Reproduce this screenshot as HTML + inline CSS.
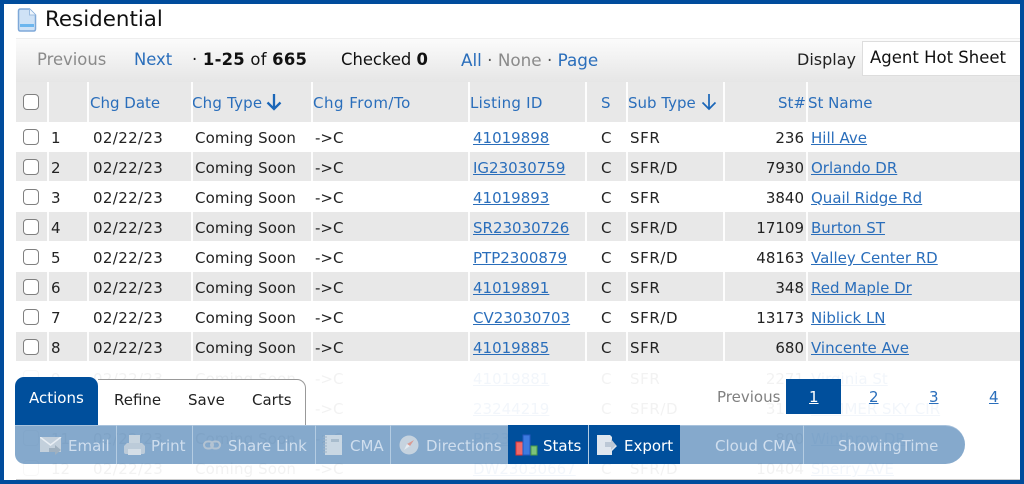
<!DOCTYPE html>
<html><head><meta charset="utf-8">
<style>
html,body{margin:0;padding:0;background:#fff}
body{width:1024px;height:484px;position:relative;overflow:hidden;font-family:"DejaVu Sans",sans-serif;font-size:15px;color:#222}
.wrap{position:absolute;left:0;top:0;width:1024px;height:484px;filter:blur(.3px)}
.a{position:absolute;white-space:nowrap}
.frame{position:absolute;left:0;top:0;width:1016px;height:476px;border:4px solid #004c9c;z-index:50;pointer-events:none}
.bar{position:absolute;left:16px;top:38px;width:1004px;height:43px;background:linear-gradient(#fbfbfb,#e6e6e6);border-top:1px solid #eee}
.tb{font-size:16.4px;top:51px;line-height:18px}
.blue{color:#2a6ebb}.gray{color:#8a8a8a}
.hd{position:absolute;left:16px;top:82px;width:1004px;height:40px;background:#e8e8e8}
.sep{position:absolute;top:82px;width:2px;height:281px;background:#fff;opacity:.9}
.row{position:absolute;left:16px;width:1004px;height:30px}
.row.g{background:#e8e8e8}
.row:after{content:"";position:absolute;left:0;right:0;bottom:0;height:1px;background:#fff}
.cb{position:absolute;width:14px;height:14px;border:1.5px solid #808080;border-radius:4px;background:#fff}
.row .cb{top:7px !important}
.t{position:absolute;white-space:nowrap;line-height:18px;top:7px}
.d{letter-spacing:.35px}
.c{letter-spacing:.13px}
.f{letter-spacing:.6px}
.h{position:absolute;white-space:nowrap;color:#2a6ebb;top:94px;line-height:18px}
.t a,.l{color:#2a6ebb;text-decoration:underline}
.fade{position:absolute;left:0;top:363px;width:1024px;height:117px;opacity:.06}
.tabs{position:absolute;left:98px;top:379px;width:207px;height:46px;background:#fff;border:1px solid #999;border-left:0;border-bottom:0;border-radius:0 9px 0 0}
.act{position:absolute;left:15px;top:377px;width:83px;height:49px;background:#004f9c;border-radius:9px 9px 0 0;color:#fff}
.tool{position:absolute;left:15px;top:425px;width:950px;height:39px;background:rgba(0,76,148,.48);border-radius:0 20px 20px 10px;border-top:1px solid #a8c2dc;box-sizing:border-box}
.dk{position:absolute;top:425px;height:39px;background:#004f9c}
.s2{position:absolute;top:425px;width:1px;height:39px;background:#b4cce2}
.w{color:#cfdeee;top:437px;line-height:18px}
.ww{color:#fff;top:437px;line-height:18px}
</style></head><body><div class="wrap">
<svg class="a" style="left:17px;top:8px" width="20" height="24" viewBox="0 0 20 24"><path d="M1.500 3q0-2 2-2h9l6 6v14q0 2-2 2h-13q-2 0-2-2z" fill="#cfe2f6" stroke="#7ea8d8" stroke-width="1.500"/><path d="M12.500 1v6h6" fill="#eef5fc" stroke="#9dbde0"/><rect x="3" y="16" width="14" height="3" fill="#6db6ee"/></svg>
<div class="a" style="left:45px;top:7px;font-size:21.400px;line-height:26px;color:#111">Residential</div>
<div class="bar"></div>
<div class="a tb gray" style="left:37px">Previous</div>
<div class="a tb blue" style="left:134px">Next</div>
<div class="a tb" style="left:192px;color:#111;letter-spacing:.25px">· <b>1-25</b> of <b>665</b></div>
<div class="a tb" style="left:341px;color:#111">Checked <b>0</b></div>
<div class="a tb blue" style="left:461px;font-size:16.800px">All <span style="color:#555">·</span> <span class="gray">None</span> <span style="color:#555">·</span> Page</div>
<div class="a tb" style="left:797px;color:#222;font-size:16px">Display</div>
<div class="a" style="left:862px;top:41px;width:158px;height:33px;background:#fff;border:1px solid #ddd;border-right:0;box-sizing:content-box"></div>
<div class="a" style="left:870px;top:49px;font-size:16.500px;line-height:18px;color:#111">Agent Hot Sheet</div>
<div class="hd"></div>
<div class="cb" style="left:23px;top:94px"></div>
<div class="h" style="left:90px">Chg Date</div>
<div class="h" style="left:192px;letter-spacing:.2px">Chg Type</div>
<svg class="a" style="left:265px;top:93px" width="18" height="18" viewBox="0 0 18 18"><path d="M9 1v15M2.500 9.500L9 16l6.500-6.500" fill="none" stroke="#1a66b8" stroke-width="2.300"/></svg>
<div class="h" style="left:313px;letter-spacing:.5px">Chg From/To</div>
<div class="h" style="left:470px;letter-spacing:.25px">Listing ID</div>
<div class="h" style="left:601px">S</div>
<div class="h" style="left:628px">Sub Type</div>
<svg class="a" style="left:700px;top:93px" width="18" height="18" viewBox="0 0 18 18"><path d="M9 1v15M2.500 9.500L9 16l6.500-6.500" fill="none" stroke="#1a66b8" stroke-width="1.700"/></svg>
<div class="h" style="left:778px">St#</div>
<div class="h" style="left:808px">St Name</div>

<div class="row" style="top:122px"><div class="cb" style="left:7px"></div><div class="t" style="left:35px">1</div><div class="t d" style="left:77px">02/22/23</div><div class="t c" style="left:179px">Coming Soon</div><div class="t" style="left:299px">-&gt;C</div><div class="t" style="left:457px"><a>41019898</a></div><div class="t" style="left:585px">C</div><div class="t f" style="left:614px">SFR</div><div class="t" style="right:216px">236</div><div class="t" style="left:795px"><a>Hill Ave</a></div></div>
<div class="row g" style="top:152px"><div class="cb" style="left:7px"></div><div class="t" style="left:35px">2</div><div class="t d" style="left:77px">02/22/23</div><div class="t c" style="left:179px">Coming Soon</div><div class="t" style="left:299px">-&gt;C</div><div class="t" style="left:457px"><a>IG23030759</a></div><div class="t" style="left:585px">C</div><div class="t f" style="left:614px">SFR/D</div><div class="t" style="right:216px">7930</div><div class="t" style="left:795px"><a>Orlando DR</a></div></div>
<div class="row" style="top:182px"><div class="cb" style="left:7px"></div><div class="t" style="left:35px">3</div><div class="t d" style="left:77px">02/22/23</div><div class="t c" style="left:179px">Coming Soon</div><div class="t" style="left:299px">-&gt;C</div><div class="t" style="left:457px"><a>41019893</a></div><div class="t" style="left:585px">C</div><div class="t f" style="left:614px">SFR</div><div class="t" style="right:216px">3840</div><div class="t" style="left:795px"><a>Quail Ridge Rd</a></div></div>
<div class="row g" style="top:212px"><div class="cb" style="left:7px"></div><div class="t" style="left:35px">4</div><div class="t d" style="left:77px">02/22/23</div><div class="t c" style="left:179px">Coming Soon</div><div class="t" style="left:299px">-&gt;C</div><div class="t" style="left:457px"><a>SR23030726</a></div><div class="t" style="left:585px">C</div><div class="t f" style="left:614px">SFR/D</div><div class="t" style="right:216px">17109</div><div class="t" style="left:795px"><a>Burton ST</a></div></div>
<div class="row" style="top:242px"><div class="cb" style="left:7px"></div><div class="t" style="left:35px">5</div><div class="t d" style="left:77px">02/22/23</div><div class="t c" style="left:179px">Coming Soon</div><div class="t" style="left:299px">-&gt;C</div><div class="t" style="left:457px"><a>PTP2300879</a></div><div class="t" style="left:585px">C</div><div class="t f" style="left:614px">SFR/D</div><div class="t" style="right:216px">48163</div><div class="t" style="left:795px"><a>Valley Center RD</a></div></div>
<div class="row g" style="top:272px"><div class="cb" style="left:7px"></div><div class="t" style="left:35px">6</div><div class="t d" style="left:77px">02/22/23</div><div class="t c" style="left:179px">Coming Soon</div><div class="t" style="left:299px">-&gt;C</div><div class="t" style="left:457px"><a>41019891</a></div><div class="t" style="left:585px">C</div><div class="t f" style="left:614px">SFR</div><div class="t" style="right:216px">348</div><div class="t" style="left:795px"><a>Red Maple Dr</a></div></div>
<div class="row" style="top:302px"><div class="cb" style="left:7px"></div><div class="t" style="left:35px">7</div><div class="t d" style="left:77px">02/22/23</div><div class="t c" style="left:179px">Coming Soon</div><div class="t" style="left:299px">-&gt;C</div><div class="t" style="left:457px"><a>CV23030703</a></div><div class="t" style="left:585px">C</div><div class="t f" style="left:614px">SFR/D</div><div class="t" style="right:216px">13173</div><div class="t" style="left:795px"><a>Niblick LN</a></div></div>
<div class="row g" style="top:332px"><div class="cb" style="left:7px"></div><div class="t" style="left:35px">8</div><div class="t d" style="left:77px">02/22/23</div><div class="t c" style="left:179px">Coming Soon</div><div class="t" style="left:299px">-&gt;C</div><div class="t" style="left:457px"><a>41019885</a></div><div class="t" style="left:585px">C</div><div class="t f" style="left:614px">SFR</div><div class="t" style="right:216px">680</div><div class="t" style="left:795px"><a>Vincente Ave</a></div></div>

<div class="sep" style="left:47px"></div><div class="sep" style="left:87px"></div><div class="sep" style="left:191px"></div><div class="sep" style="left:311px"></div><div class="sep" style="left:468px"></div><div class="sep" style="left:585px"></div><div class="sep" style="left:626px"></div><div class="sep" style="left:723px"></div><div class="sep" style="left:806px"></div>

<div class="fade">
<div class="row" style="top:0"><div class="cb" style="left:7px"></div><div class="t" style="left:35px">9</div><div class="t d" style="left:77px">02/22/23</div><div class="t c" style="left:179px">Coming Soon</div><div class="t" style="left:299px">-&gt;C</div><div class="t" style="left:457px"><a>41019881</a></div><div class="t" style="left:585px">C</div><div class="t f" style="left:614px">SFR</div><div class="t" style="right:216px">2271</div><div class="t" style="left:795px"><a>Virginia St</a></div></div>
<div class="row" style="top:30px"><div class="cb" style="left:7px"></div><div class="t" style="left:35px">10</div><div class="t d" style="left:77px">02/22/23</div><div class="t c" style="left:179px">Coming Soon</div><div class="t" style="left:299px">-&gt;C</div><div class="t" style="left:457px"><a>23244219</a></div><div class="t" style="left:585px">C</div><div class="t f" style="left:614px">SFR/D</div><div class="t" style="right:216px">3120</div><div class="t" style="left:795px"><a>SUMMER SKY CIR</a></div></div>
<div class="row" style="top:60px"><div class="cb" style="left:7px"></div><div class="t" style="left:35px">11</div><div class="t d" style="left:77px">02/22/23</div><div class="t c" style="left:179px">Coming Soon</div><div class="t" style="left:299px">-&gt;C</div><div class="t" style="left:457px"><a>PF23030697</a></div><div class="t" style="left:585px">C</div><div class="t f" style="left:614px">SFR/D</div><div class="t" style="right:216px">800</div><div class="t" style="left:795px"><a>Winthrop DR</a></div></div>
<div class="row" style="top:90px"><div class="cb" style="left:7px"></div><div class="t" style="left:35px">12</div><div class="t d" style="left:77px">02/22/23</div><div class="t c" style="left:179px">Coming Soon</div><div class="t" style="left:299px">-&gt;C</div><div class="t" style="left:457px"><a>DW23030667</a></div><div class="t" style="left:585px">C</div><div class="t f" style="left:614px">SFR/D</div><div class="t" style="right:216px">10404</div><div class="t" style="left:795px"><a>Sherry AVE</a></div></div>
</div>
<div class="a" style="left:16px;top:479px;width:1004px;height:1px;background:#ccc"></div>

<div class="a gray" style="left:717px;top:388px;line-height:18px;color:#808080">Previous</div>
<div class="a" style="left:786px;top:379px;width:55px;height:35px;background:#004f9c"></div>
<div class="a" style="left:809px;top:388px;line-height:18px;color:#fff;text-decoration:underline">1</div>
<div class="a l" style="left:869px;top:388px;line-height:18px">2</div>
<div class="a l" style="left:929px;top:388px;line-height:18px">3</div>
<div class="a l" style="left:989px;top:388px;line-height:18px">4</div>

<div class="tabs"></div>
<div class="act"></div>
<div class="a" style="left:29px;top:389px;line-height:18px;color:#fff">Actions</div>
<div class="a" style="left:114px;top:391px;line-height:18px;color:#222">Refine</div>
<div class="a" style="left:188px;top:391px;line-height:18px;color:#222">Save</div>
<div class="a" style="left:252px;top:391px;line-height:18px;color:#222">Carts</div>

<div class="tool"></div>
<div class="dk" style="left:508px;width:80px"></div>
<div class="dk" style="left:589px;width:91px"></div>
<div class="s2" style="left:116px"></div><div class="s2" style="left:192px"></div><div class="s2" style="left:315px"></div><div class="s2" style="left:390px"></div><div class="s2" style="left:588px"></div><div class="s2" style="left:803px"></div>

<svg class="a" style="left:40px;top:437px" width="22" height="19" viewBox="0 0 22 19"><rect x="0" y="0" width="21" height="15" fill="#c3d0dc"/><path d="M0 0l10.500 8L21 0" fill="none" stroke="#e8eef4" stroke-width="1.500"/><path d="M9 11h6V8l6 5-6 5v-3H9z" fill="#9fb0bf"/></svg>
<div class="a w" style="left:68px">Email</div>
<svg class="a" style="left:123px;top:434px" width="23" height="23" viewBox="0 0 23 23"><path d="M6 1h11v8H6z" fill="#c7d4df"/><path d="M4 9h15l3 3v6q0 2-2 2H3q-2 0-2-2v-6z" fill="#bccbd9"/><rect x="5" y="15" width="13" height="6" fill="#d4dee7"/></svg>
<div class="a w" style="left:151px">Print</div>
<svg class="a" style="left:203px;top:440px" width="18" height="10" viewBox="0 0 18 10"><rect x="1" y="1.500" width="9" height="7" rx="3.500" fill="none" stroke="#b3c3d2" stroke-width="2"/><rect x="8" y="1.500" width="9" height="7" rx="3.500" fill="none" stroke="#b3c3d2" stroke-width="2"/></svg>
<div class="a w" style="left:228px">Share Link</div>
<svg class="a" style="left:323px;top:434px" width="20" height="22" viewBox="0 0 20 22"><rect x="2" y="1" width="17" height="20" fill="#c9d7e3"/><path d="M0 3h4M0 6h4M0 9h4M0 12h4M0 15h4M0 18h4" stroke="#9db3c7" stroke-width="1"/><rect x="8" y="5" width="8" height="3" fill="#a8bccd"/></svg>
<div class="a w" style="left:350px">CMA</div>
<svg class="a" style="left:399px;top:435px" width="20" height="20" viewBox="0 0 20 20"><circle cx="10" cy="10" r="9.500" fill="#c6d3df"/><path d="M15 5l-4 6-3-2z" fill="#d99a92"/><path d="M5 15l3-6 3 2z" fill="#e4ebf1"/></svg>
<div class="a w" style="left:426px">Directions</div>
<svg class="a" style="left:515px;top:434px" width="23" height="22" viewBox="0 0 23 22"><rect x="1" y="8" width="7" height="13" fill="#ef6a6a" stroke="#d33"/><rect x="8" y="1" width="7" height="20" fill="#3d7be0" stroke="#2458c0"/><rect x="16" y="12" width="6" height="9" fill="#7cc47a" stroke="#4a9a48"/></svg>
<div class="a ww" style="left:543px">Stats</div>
<svg class="a" style="left:597px;top:434px" width="21" height="22" viewBox="0 0 21 22"><path d="M0 1h13l2 2v5l5 4-5 5v4H0z" fill="#dfe6ee"/><path d="M8 8h6V5l5 6-5 5v-3H8z" fill="#bcc8d6"/></svg>
<div class="a ww" style="left:624px">Export</div>
<div class="a w" style="left:715px">Cloud CMA</div>
<div class="a w" style="left:838px">ShowingTime</div>

<div class="frame"></div>
</div></body></html>
